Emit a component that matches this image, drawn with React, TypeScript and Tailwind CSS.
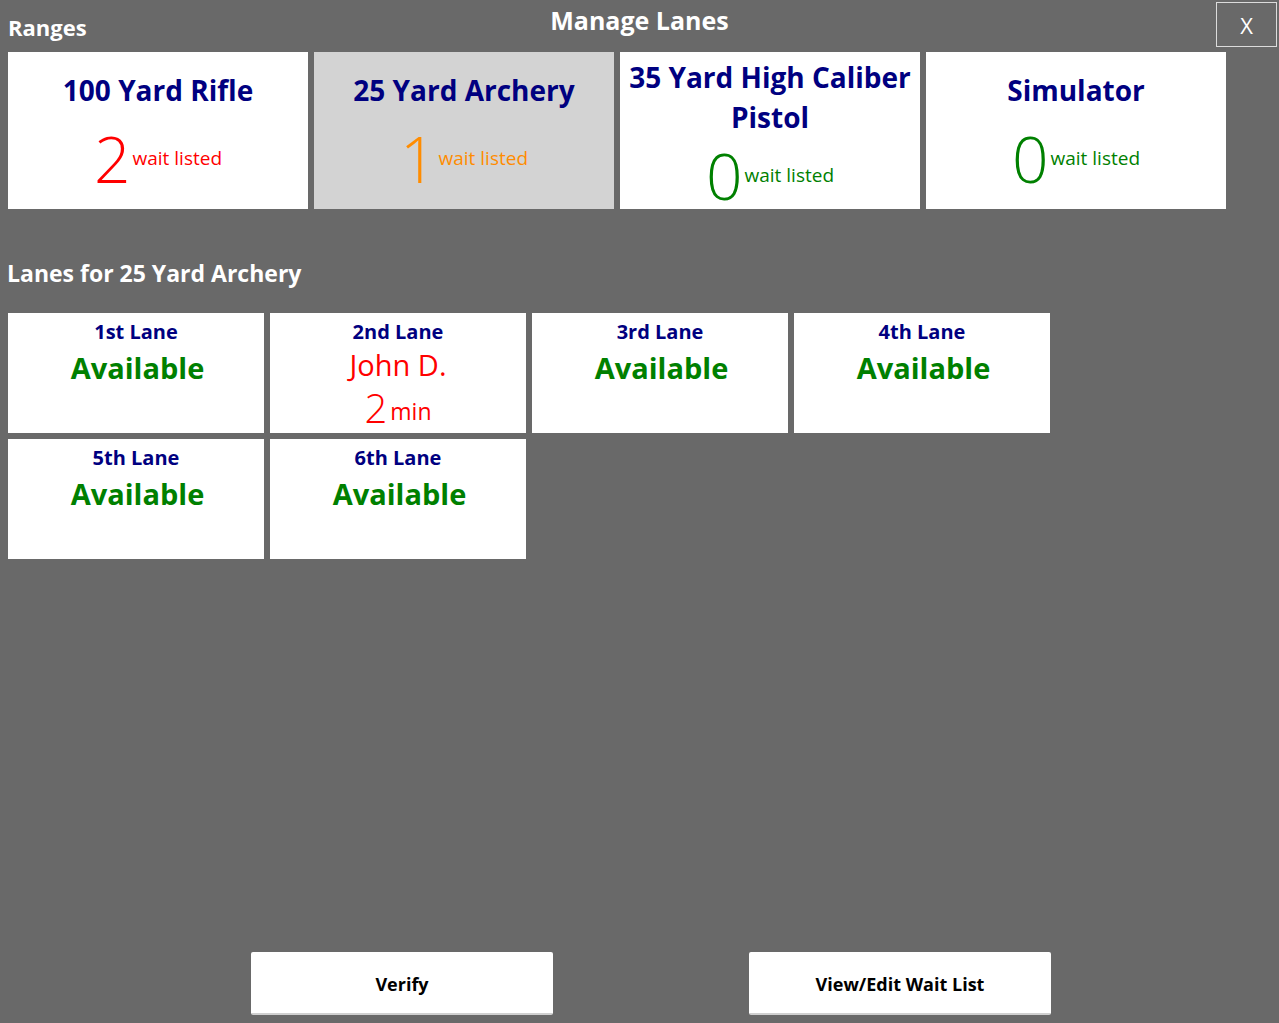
import React from "react";

const ranges = [
  { name: "100 Yard Rifle", count: 2, color: "text-[#ff0000]", selected: false, pad: "pb-[5px]", gap: "mt-[21px]" },
  { name: "25 Yard Archery", count: 1, color: "text-[#ff8c00]", selected: true, pad: "pb-[5px]", gap: "mt-[21px]" },
  { name: "35 Yard High Caliber Pistol", count: 0, color: "text-[#008000]", selected: false, pad: "pb-0", gap: "mt-[11px]" },
  { name: "Simulator", count: 0, color: "text-[#008000]", selected: false, pad: "pb-[5px]", gap: "mt-[21px]" },
];

const lanes = [
  { name: "1st Lane" },
  { name: "2nd Lane", user: "John D.", mins: 2 },
  { name: "3rd Lane" },
  { name: "4th Lane" },
  { name: "5th Lane" },
  { name: "6th Lane" },
];

const font = { fontFamily: '"Open Sans", "Noto Sans", sans-serif' };

export default function App() {
  return (
    <div className="w-[1279px] h-[1023px] bg-[#696969] flex flex-col" style={font}>
      {/* header */}
      <div className="flex items-start h-[52px]">
        <div className="w-[200px] pl-2 pt-[12px] text-white font-bold text-[22px] leading-[30px]">Ranges</div>
        <div className="flex-1 text-center text-white font-bold text-[25px] leading-[32px] pt-[4px]">
          Manage Lanes
        </div>
        <div className="w-[200px] flex justify-end pt-[2px] pr-[2px]">
          <button className="w-[61px] h-[45px] border border-[#dcdcdc] text-white text-[22px] leading-none">X</button>
        </div>
      </div>

      {/* range cards */}
      <div className="flex gap-[6px] pl-2">
        {ranges.map((r) => (
          <div
            key={r.name}
            className={`w-[300px] h-[157px] flex flex-col items-center justify-center ${r.pad} ${r.selected ? "bg-[#d3d3d3]" : "bg-white"}`}
          >
            <div className="text-[#000080] font-bold text-[28px] leading-[40px] text-center">{r.name}</div>
            <div className={`flex items-start ${r.gap} ${r.color}`}>
              <span className="text-[64px] leading-[56px]" style={{ fontWeight: 300 }}>{r.count}</span>
              <span className="text-[19px] leading-[26px] mt-[14px] ml-[2px]">wait listed</span>
            </div>
          </div>
        ))}
      </div>

      <div className="pl-[7px] pt-[49px] text-white font-bold text-[23px] leading-[30px]">Lanes for 25 Yard Archery</div>

      {/* lanes */}
      <div className="pl-2 pt-[25px] grid grid-cols-[repeat(4,256px)] gap-[6px]">
        {lanes.map((l) => (
          <div key={l.name} className="h-[120px] bg-white flex flex-col items-center pt-[5px]">
            <div className="text-[#000080] font-bold text-[20px] leading-[28px]">{l.name}</div>
            {l.user ? (
              <div className="flex flex-col items-center text-[#ff0000]">
                <div className="text-[29px] leading-[38px]">{l.user}</div>
                <div className="flex items-end mt-[4px]">
                  <span className="text-[40px] leading-[40px]" style={{ fontWeight: 300 }}>{l.mins}</span>
                  <span className="text-[23px] leading-[30px] ml-[3px] mb-[2px]">min</span>
                </div>
              </div>
            ) : (
              <div className="text-[#008000] font-bold text-[29px] leading-[44px] pl-[3px]">Available</div>
            )}
          </div>
        ))}
      </div>

      <div className="flex-1" />

      {/* bottom buttons */}
      <div className="flex pb-2 pl-[251px] gap-[196px]">
        <button className="w-[302px] h-[63px] bg-white border-b-2 border-[#d0d0d0] rounded-[2px] text-black font-bold text-[18px] pt-[3px]">
          Verify
        </button>
        <button className="w-[302px] h-[63px] bg-white border-b-2 border-[#d0d0d0] rounded-[2px] text-black font-bold text-[18px] pt-[3px]">
          View/Edit Wait List
        </button>
      </div>
    </div>
  );
}
